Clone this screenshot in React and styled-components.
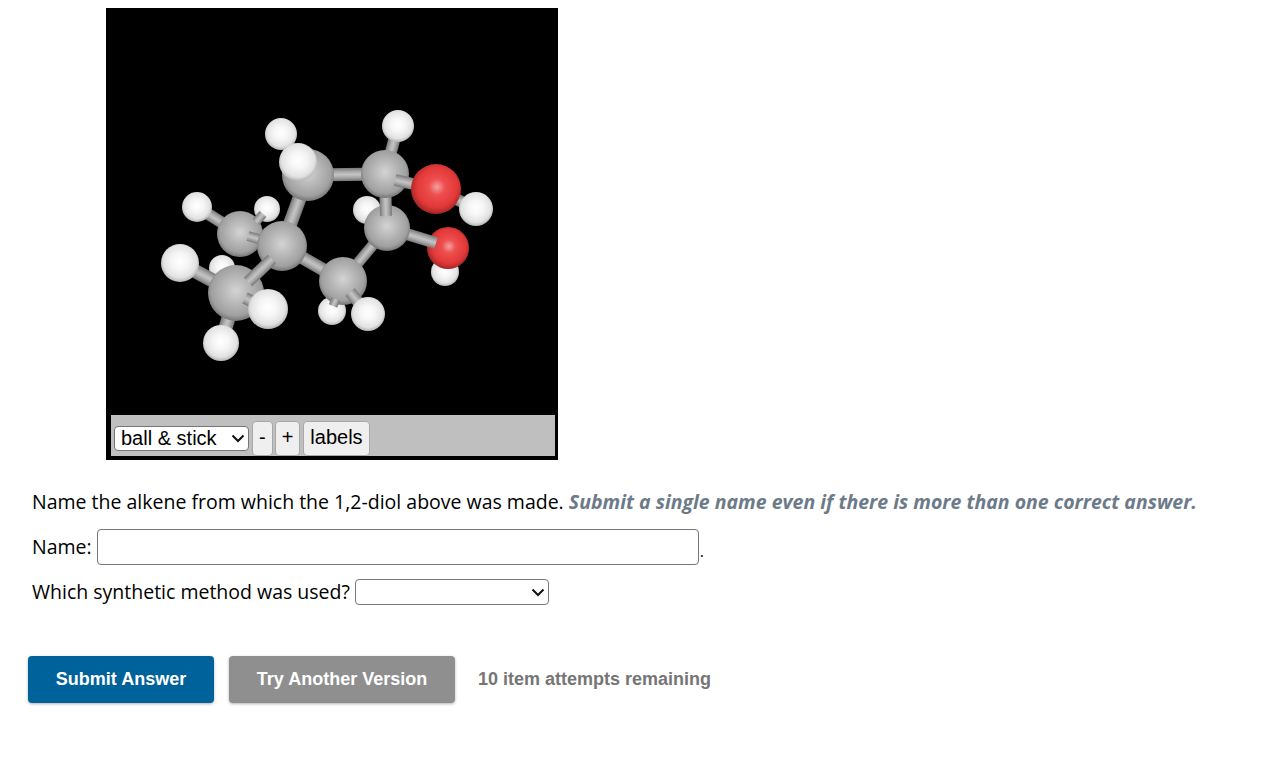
import React from 'react';
import styled, { createGlobalStyle } from 'styled-components';

const GlobalStyle = createGlobalStyle`
  body {
    margin: 0;
    background: #fff;
    color: #000;
    font-family: "Open Sans", "Liberation Sans", sans-serif;
  }
`;

const H = 'url(#hydrogen)';
const C = 'url(#carbon)';
const O = 'url(#oxygen)';

// painted back to front, page coordinates
const scene = [
  { atom: [367, 210, 14, H] },
  { atom: [445, 272, 14, H] },
  { atom: [448, 248, 21, O] },
  { bond: [387, 228, 436, 243, 12] },
  { bond: [387, 228, 343, 281, 11] },
  { atom: [387, 228, 23, C] },
  { bond: [385, 174, 386, 216, 12] },
  { bond: [385, 174, 398, 126, 12] },
  { atom: [398, 126, 16, H] },
  { bond: [308, 175, 385, 174, 13] },
  { atom: [385, 174, 24, C] },
  { bond: [395, 180, 436, 189, 12] },
  { bond: [436, 189, 476, 209, 12] },
  { atom: [476, 209, 17, H] },
  { atom: [436, 189, 25, O] },
  { bond: [281, 134, 308, 175, 12] },
  { atom: [281, 134, 16, H] },
  { bond: [308, 175, 282, 246, 14] },
  { atom: [308, 175, 26, C] },
  { atom: [298, 162, 19, H] },
  { atom: [222, 268, 13, H] },
  { bond: [197, 207, 240, 234, 12] },
  { atom: [197, 207, 15, H] },
  { atom: [267, 209, 13, H] },
  { atom: [240, 234, 23, C] },
  { bond: [256, 222, 263, 214, 9] },
  { bond: [248, 236, 282, 246, 10] },
  { bond: [282, 246, 343, 281, 13] },
  { atom: [282, 246, 25, C] },
  { bond: [180, 263, 236, 293, 14] },
  { atom: [180, 263, 19, H] },
  { bond: [221, 343, 236, 293, 14] },
  { atom: [221, 343, 18, H] },
  { atom: [236, 293, 28, C] },
  { bond: [245, 298, 268, 309, 12] },
  { atom: [268, 309, 20, H] },
  { bond: [272, 259, 248, 282, 12] },
  { atom: [332, 311, 14, H] },
  { atom: [343, 281, 24, C] },
  { bond: [336, 299, 333, 306, 9] },
  { bond: [350, 292, 368, 314, 12] },
  { atom: [368, 314, 17, H] },
];

// shaded across its width, so the gradient runs perpendicular to the stick
const Bond = ({ id, x1, y1, x2, y2, width }) => {
  const len = Math.hypot(x2 - x1, y2 - y1);
  const nx = (-(y2 - y1) / len) * (width / 2);
  const ny = ((x2 - x1) / len) * (width / 2);
  return (
    <>
      <linearGradient
        id={id}
        gradientUnits="userSpaceOnUse"
        x1={x1 - nx}
        y1={y1 - ny}
        x2={x1 + nx}
        y2={y1 + ny}
      >
        <stop offset="0%" stopColor="#777777" />
        <stop offset="30%" stopColor="#acacac" />
        <stop offset="50%" stopColor="#c4c4c4" />
        <stop offset="70%" stopColor="#acacac" />
        <stop offset="100%" stopColor="#777777" />
      </linearGradient>
      <line x1={x1} y1={y1} x2={x2} y2={y2} stroke={`url(#${id})`} strokeWidth={width} />
    </>
  );
};

const Molecule = () => (
  <Canvas viewBox="111 8 444 407">
    <defs>
      <radialGradient id="hydrogen" cx="50%" cy="46%" r="54%">
        <stop offset="0%" stopColor="#ffffff" />
        <stop offset="40%" stopColor="#f6f6f6" />
        <stop offset="80%" stopColor="#e2e2e2" />
        <stop offset="100%" stopColor="#b4b4b4" />
      </radialGradient>
      <radialGradient id="carbon" cx="50%" cy="46%" r="54%">
        <stop offset="0%" stopColor="#d4d4d4" />
        <stop offset="40%" stopColor="#bababa" />
        <stop offset="82%" stopColor="#a0a0a0" />
        <stop offset="100%" stopColor="#757575" />
      </radialGradient>
      <radialGradient id="oxygen" cx="52%" cy="46%" r="54%">
        <stop offset="0%" stopColor="#f4a0a0" />
        <stop offset="30%" stopColor="#ee4f4f" />
        <stop offset="75%" stopColor="#e23838" />
        <stop offset="100%" stopColor="#a52626" />
      </radialGradient>
    </defs>
    {scene.map((item, i) =>
      item.atom ? (
        <circle key={i} cx={item.atom[0]} cy={item.atom[1]} r={item.atom[2]} fill={item.atom[3]} />
      ) : (
        <Bond
          key={i}
          id={`bond-${i}`}
          x1={item.bond[0]}
          y1={item.bond[1]}
          x2={item.bond[2]}
          y2={item.bond[3]}
          width={item.bond[4]}
        />
      )
    )}
  </Canvas>
);

const App = () => (
  <Page>
    <GlobalStyle />
    <Viewer>
      <Molecule />
      <Toolbar>
        <ViewSelect defaultValue="ball">
          <option value="ball">ball &amp; stick</option>
          <option value="wire">wireframe</option>
          <option value="fill">spacefill</option>
        </ViewSelect>
        <ToolButton>-</ToolButton>
        <ToolButton>+</ToolButton>
        <ToolButton>labels</ToolButton>
      </Toolbar>
    </Viewer>
    <Question>
      <Prompt>
        Name the alkene from which the 1,2-diol above was made.{' '}
        <Hint>Submit a single name even if there is more than one correct answer.</Hint>
      </Prompt>
      <NameRow>
        <RowLabel>Name: </RowLabel>
        <NameInput type="text" />
        <Period>.</Period>
      </NameRow>
      <MethodRow>
        <RowLabel>Which synthetic method was used? </RowLabel>
        <MethodSelect />
      </MethodRow>
    </Question>
    <Actions>
      <ActionButton>Submit Answer</ActionButton>
      <ActionButton $muted>Try Another Version</ActionButton>
      <Attempts>10 item attempts remaining</Attempts>
    </Actions>
  </Page>
);

const chevron =
  "url(\"data:image/svg+xml,%3Csvg xmlns='http://www.w3.org/2000/svg' width='14' height='9' viewBox='0 0 14 9'%3E%3Cpath d='M1.5 1.5 7 7l5.5-5.5' fill='none' stroke='%23111' stroke-width='2'/%3E%3C/svg%3E\")";

const Page = styled.div`
  padding-top: 8px;
  height: 751px;
  overflow: hidden;
`;

const Viewer = styled.div`
  margin-left: 106px;
  width: 452px;
  height: 452px;
  box-sizing: border-box;
  padding: 0 3px 4px 5px;
  background: #000;
  display: flex;
  flex-direction: column;
`;

const Canvas = styled.svg`
  display: block;
  width: 444px;
  height: 407px;
  flex: none;
`;

const Toolbar = styled.div`
  flex: 1;
  background: #bfbfbf;
  display: flex;
  align-items: center;
  gap: 2px;
  padding: 6px 0 0 3px;
  box-sizing: border-box;
  font-family: "Liberation Sans", Arial, sans-serif;
`;

const ViewSelect = styled.select`
  appearance: none;
  width: 135px;
  height: 25px;
  margin-right: 1px;
  padding: 0 0 2px 6px;
  box-sizing: border-box;
  font: 20px "Liberation Sans", Arial, sans-serif;
  color: #000;
  background: #fff ${chevron} no-repeat right 3px center;
  border: 1px solid #767676;
  border-radius: 4px;
`;

const ToolButton = styled.button`
  height: 35px;
  padding: 0 6px 2px;
  box-sizing: border-box;
  font: 20px "Liberation Sans", Arial, sans-serif;
  color: #000;
  background: #efefef;
  border: 1px solid #a8a8a8;
  border-radius: 4px;

  &:last-child {
    margin-left: 1px;
  }
`;

const Question = styled.div`
  padding: 27px 0 0 32px;
  font-size: 19.5px;
  color: #000;
`;

const Prompt = styled.div`
  line-height: 30px;
  white-space: nowrap;
`;

const Hint = styled.em`
  font-weight: 700;
  font-style: italic;
  color: #6c7a89;
`;

const RowLabel = styled.span`
  white-space: pre;
  margin-top: -2px;
`;

const NameRow = styled.div`
  display: flex;
  align-items: center;
  margin-top: 12px;
  height: 36px;
`;

const NameInput = styled.input`
  width: 602px;
  height: 36px;
  box-sizing: border-box;
  background: #fff;
  border: 1px solid #767676;
  border-radius: 4px;
`;

const Period = styled.span`
  font-size: 16px;
  margin: 8px 0 0 1px;
`;

const MethodRow = styled.div`
  display: flex;
  align-items: center;
  margin-top: 14px;
  height: 26px;
`;

const MethodSelect = styled.select`
  appearance: none;
  width: 194px;
  height: 26px;
  box-sizing: border-box;
  background: #fff ${chevron} no-repeat right 3px center;
  border: 1px solid #767676;
  border-radius: 4px;
`;

const Actions = styled.div`
  display: flex;
  align-items: center;
  gap: 15px;
  margin: 51px 0 0 28px;
`;

const ActionButton = styled.button`
  height: 47px;
  width: ${props => (props.$muted ? '226px' : '186px')};
  padding: 0;
  border: none;
  border-radius: 4px;
  font: bold 18px "Liberation Sans", Arial, sans-serif;
  color: #fff;
  background: ${props => (props.$muted ? '#8f8f8f' : '#00629b')};
  box-shadow: 0 1px 3px rgba(0, 0, 0, 0.3);
`;

const Attempts = styled.span`
  margin-left: 8px;
  font: bold 18px "Liberation Sans", Arial, sans-serif;
  color: #757575;
`;

export default App;
